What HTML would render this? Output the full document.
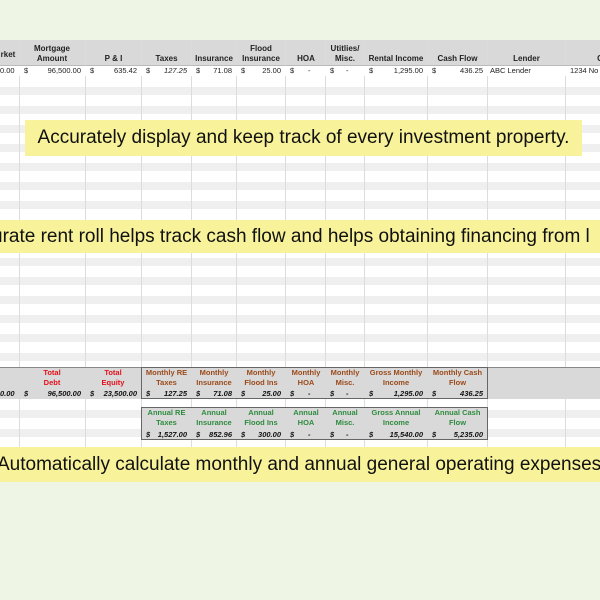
<!DOCTYPE html><html><head><style>
body{margin:0;width:600px;height:600px;background:#eef5e5;position:relative;overflow:hidden;font-family:"Liberation Sans",Arial,sans-serif}
.a{position:absolute}
#sheet{left:0;top:40px;width:600px;height:410px;background:repeating-linear-gradient(#fff 0 11px,#efefef 11px 19px);background-position:0 36px}
.vl{position:absolute;top:40px;height:410px;width:1px;background:#dcdcdc}
#hdr{left:0;top:40px;width:600px;height:25px;background:#d9d9d9}
.h{position:absolute;font-size:8px;font-weight:bold;color:#222;text-align:center;line-height:10px}
.d{position:absolute;font-size:7.5px;color:#222;top:66px;line-height:9px}
.ban{position:absolute;background:#f8f39a;font-family:"Liberation Sans",sans-serif;color:#111;white-space:nowrap;font-size:19px}
.box{position:absolute;border:1px solid #666;background:#d9d9d9}
.s{position:absolute;font-size:7.5px;font-weight:bold;text-align:center;line-height:10px}
.v{position:absolute;font-size:7.5px;font-weight:bold;font-style:italic;line-height:9px;color:#111}
</style></head><body>
<div class="a" id="sheet"></div>
<div class="a" id="hdr"></div>
<div class="vl" style="left:19px"></div><div class="vl" style="left:85px"></div><div class="vl" style="left:141px"></div><div class="vl" style="left:191px"></div><div class="vl" style="left:236px"></div><div class="vl" style="left:285px"></div><div class="vl" style="left:325px"></div><div class="vl" style="left:364px"></div><div class="vl" style="left:427px"></div><div class="vl" style="left:487px"></div><div class="vl" style="left:565px"></div>
<div class="a" style="left:0;top:65px;width:600px;height:1px;background:#bbb"></div>
<div class="a" style="left:0;top:66px;width:600px;height:10px;background:#fff"></div>
<div class="h" style="left:0;top:50px;width:16px">rket</div>
<div class="h" style="left:20px;top:44px;width:64px">Mortgage<br>Amount</div>
<div class="h" style="left:86px;top:54px;width:55px">P &amp; I</div>
<div class="h" style="left:142px;top:54px;width:49px">Taxes</div>
<div class="h" style="left:192px;top:54px;width:44px">Insurance</div>
<div class="h" style="left:237px;top:44px;width:48px">Flood<br>Insurance</div>
<div class="h" style="left:286px;top:54px;width:40px">HOA</div>
<div class="h" style="left:326px;top:44px;width:38px">Utitlies/<br>Misc.</div>
<div class="h" style="left:365px;top:54px;width:62px">Rental Income</div>
<div class="h" style="left:428px;top:54px;width:59px">Cash Flow</div>
<div class="h" style="left:488px;top:54px;width:77px">Lender</div>
<div class="h" style="left:590px;top:54px;width:20px">C</div>
<div class="d" style="left:0">0.00</div>
<div class="d" style="left:24px">$</div><div class="d" style="left:40px;width:41px;text-align:right">96,500.00</div>
<div class="d" style="left:90px">$</div><div class="d" style="left:100px;width:37px;text-align:right">635.42</div>
<div class="d" style="left:146px">$</div><div class="d" style="left:155px;width:32px;text-align:right;font-style:italic">127.25</div>
<div class="d" style="left:196px">$</div><div class="d" style="left:205px;width:27px;text-align:right">71.08</div>
<div class="d" style="left:241px">$</div><div class="d" style="left:250px;width:31px;text-align:right">25.00</div>
<div class="d" style="left:290px">$</div><div class="d" style="left:308px">-</div>
<div class="d" style="left:330px">$</div><div class="d" style="left:346px">-</div>
<div class="d" style="left:369px">$</div><div class="d" style="left:380px;width:43px;text-align:right">1,295.00</div>
<div class="d" style="left:432px">$</div><div class="d" style="left:440px;width:43px;text-align:right">436.25</div>
<div class="d" style="left:490px">ABC Lender</div>
<div class="d" style="left:570px;white-space:nowrap">1234 No</div>
<div class="ban" style="left:25px;top:120px;width:557px;height:36px;line-height:36px;text-align:center">Accurately display and keep track of every investment property.</div>
<div class="ban" style="left:0;top:220px;width:600px;height:33px;line-height:33px;text-indent:-8px">urate rent roll helps track cash flow and helps obtaining financing from l</div>
<div class="a" style="left:0;top:367px;width:600px;height:31px;background:#d9d9d9;border-top:1px solid #888"></div>
<div class="box" style="left:141px;top:367px;width:345px;height:30px"></div>
<div class="s" style="left:20px;top:368px;width:64px;color:#e3101a">Total<br>Debt</div>
<div class="s" style="left:86px;top:368px;width:54px;color:#e3101a">Total<br>Equity</div>
<div class="s" style="left:142px;top:368px;width:49px;color:#9a4a1a">Monthly RE<br>Taxes</div>
<div class="s" style="left:192px;top:368px;width:44px;color:#9a4a1a">Monthly<br>Insurance</div>
<div class="s" style="left:237px;top:368px;width:48px;color:#9a4a1a">Monthly<br>Flood Ins</div>
<div class="s" style="left:286px;top:368px;width:40px;color:#9a4a1a">Monthly<br>HOA</div>
<div class="s" style="left:326px;top:368px;width:38px;color:#9a4a1a">Monthly<br>Misc.</div>
<div class="s" style="left:365px;top:368px;width:62px;color:#9a4a1a">Gross Monthly<br>Income</div>
<div class="s" style="left:428px;top:368px;width:59px;color:#9a4a1a">Monthly Cash<br>Flow</div>
<div class="v" style="left:0;top:389px">0.00</div>
<div class="v" style="left:24px;top:389px">$</div><div class="v" style="left:40px;top:389px;width:41px;text-align:right">96,500.00</div>
<div class="v" style="left:90px;top:389px">$</div><div class="v" style="left:96px;top:389px;width:41px;text-align:right">23,500.00</div>
<div class="v" style="left:146px;top:389px">$</div><div class="v" style="left:155px;top:389px;width:32px;text-align:right">127.25</div>
<div class="v" style="left:196px;top:389px">$</div><div class="v" style="left:205px;top:389px;width:27px;text-align:right">71.08</div>
<div class="v" style="left:241px;top:389px">$</div><div class="v" style="left:250px;top:389px;width:31px;text-align:right">25.00</div>
<div class="v" style="left:290px;top:389px">$</div><div class="v" style="left:308px;top:389px">-</div>
<div class="v" style="left:330px;top:389px">$</div><div class="v" style="left:346px;top:389px">-</div>
<div class="v" style="left:369px;top:389px">$</div><div class="v" style="left:380px;top:389px;width:43px;text-align:right">1,295.00</div>
<div class="v" style="left:432px;top:389px">$</div><div class="v" style="left:440px;top:389px;width:43px;text-align:right">436.25</div>
<div class="box" style="left:141px;top:407px;width:345px;height:31px"></div>
<div class="s" style="left:142px;top:408px;width:49px;color:#2e8b3e">Annual RE<br>Taxes</div>
<div class="s" style="left:192px;top:408px;width:44px;color:#2e8b3e">Annual<br>Insurance</div>
<div class="s" style="left:237px;top:408px;width:48px;color:#2e8b3e">Annual<br>Flood Ins</div>
<div class="s" style="left:286px;top:408px;width:40px;color:#2e8b3e">Annual<br>HOA</div>
<div class="s" style="left:326px;top:408px;width:38px;color:#2e8b3e">Annual<br>Misc.</div>
<div class="s" style="left:365px;top:408px;width:62px;color:#2e8b3e">Gross Annual<br>Income</div>
<div class="s" style="left:428px;top:408px;width:59px;color:#2e8b3e">Annual Cash<br>Flow</div>
<div class="v" style="left:146px;top:430px">$</div><div class="v" style="left:150px;top:430px;width:37px;text-align:right">1,527.00</div>
<div class="v" style="left:196px;top:430px">$</div><div class="v" style="left:205px;top:430px;width:27px;text-align:right">852.96</div>
<div class="v" style="left:241px;top:430px">$</div><div class="v" style="left:250px;top:430px;width:31px;text-align:right">300.00</div>
<div class="v" style="left:290px;top:430px">$</div><div class="v" style="left:308px;top:430px">-</div>
<div class="v" style="left:330px;top:430px">$</div><div class="v" style="left:346px;top:430px">-</div>
<div class="v" style="left:369px;top:430px">$</div><div class="v" style="left:380px;top:430px;width:43px;text-align:right">15,540.00</div>
<div class="v" style="left:432px;top:430px">$</div><div class="v" style="left:440px;top:430px;width:43px;text-align:right">5,235.00</div>
<div class="ban" style="left:0;top:447px;width:600px;height:35px;line-height:35px;text-indent:-3px">Automatically calculate monthly and annual general operating expenses</div>
</body></html>
